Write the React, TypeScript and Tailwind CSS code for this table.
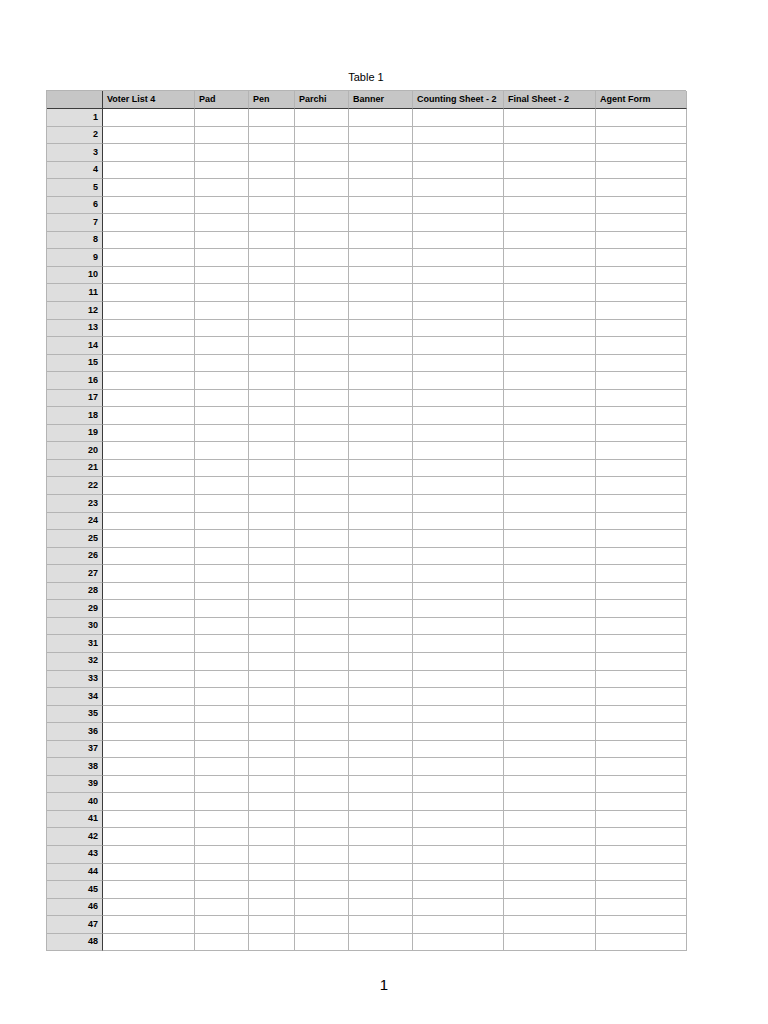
import React from "react";

const headers = [
  "",
  "Voter List 4",
  "Pad",
  "Pen",
  "Parchi",
  "Banner",
  "Counting Sheet - 2",
  "Final Sheet - 2",
  "Agent Form",
];

const rows = Array.from({ length: 48 }, (_, i) => i + 1);

export default function App() {
  return (
    <div
      className="w-[768px] h-[1024px] bg-white flex flex-col pt-[70px] text-black"
      style={{ fontFamily: '"Liberation Sans", Arial, sans-serif' }}
    >
      <div className="ml-[46px] w-[640px] text-center text-[11px] leading-[14px] h-[20px]">
        Table 1
      </div>
      <div className="ml-[46px] w-[640px] grid grid-cols-[56px_92px_54px_46px_54px_64px_91px_92px_91px] grid-rows-[18px_repeat(48,17.56px)] border-l border-t border-[#b4b4b4]">
        {headers.map((h, i) => (
          <div
            key={"h" + i}
            className={
              "bg-[#c6c6c6] border-b border-b-[#3c3c3c] flex items-center pl-[4px] text-[9px] font-bold whitespace-nowrap overflow-hidden " +
              (i === 0 ? "border-r border-r-[#3c3c3c]" : "border-r border-r-[#b4b4b4]")
            }
          >
            {h}
          </div>
        ))}
        {rows.map((r) => (
          <React.Fragment key={r}>
            <div className="bg-[#dedede] border-r border-r-[#3c3c3c] border-b border-b-[#b4b4b4] flex items-center justify-end pr-[4px] text-[9px] font-bold">
              {r}
            </div>
            {headers.slice(1).map((_, c) => (
              <div
                key={c}
                className="bg-white border-r border-b border-[#b4b4b4]"
              />
            ))}
          </React.Fragment>
        ))}
      </div>
      <div className="mt-[25px] w-[768px] text-center text-[15px] leading-[18px]">1</div>
    </div>
  );
}
